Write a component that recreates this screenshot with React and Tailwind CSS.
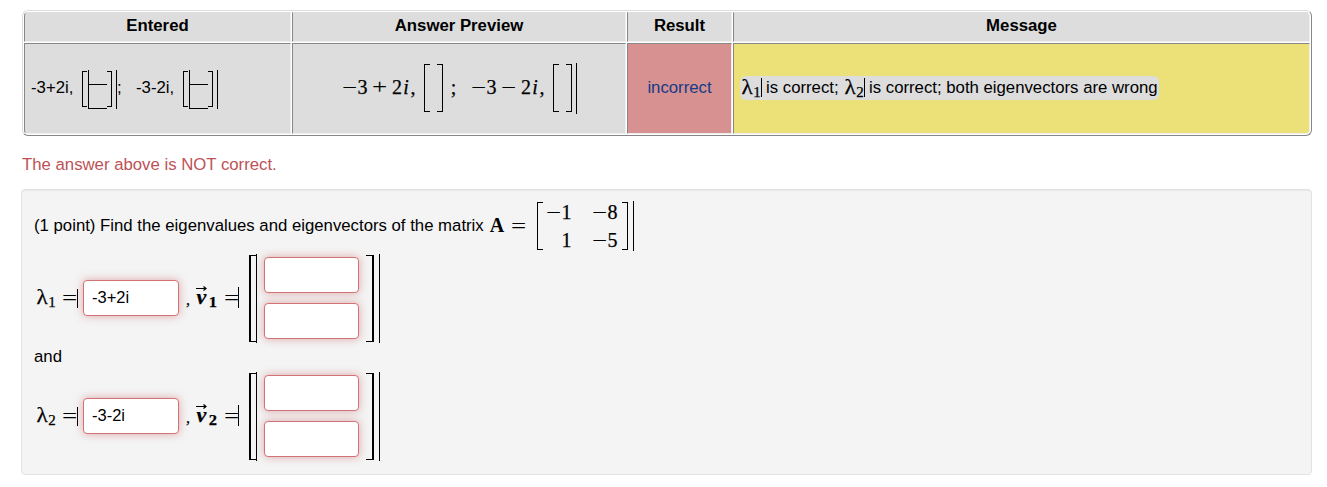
import React from "react";

const Tok = ({ size = "text-[20px]", className = "", children }) => (
  <span className={`inline-flex shrink-0 items-center justify-center whitespace-nowrap font-['Liberation_Serif',serif] leading-none [-webkit-text-stroke:0.25px_currentColor] ${size} ${className}`}>
    {children}
  </span>
);
const Txt = ({ className = "", children }) => (
  <span className={`inline-block shrink-0 whitespace-nowrap ${className}`}>{children}</span>
);
// wide mathematical operator
const Op = ({ className = "", children }) => (
  <span className={`inline-flex w-[15px] shrink-0 items-center justify-center font-['Liberation_Serif',serif] text-[20px] leading-none ${className}`}>
    <span className="inline-block scale-x-[1.35]">{children}</span>
  </span>
);
const Bar = ({ className = "" }) => <span className={`w-px shrink-0 bg-black ${className}`} />;
const LB = ({ className = "" }) => <span className={`shrink-0 border-y border-l border-black ${className}`} />;
const RB = ({ className = "" }) => <span className={`shrink-0 border-y border-r border-black ${className}`} />;

const cell = "border border-t-[#868686] border-l-[#868686] border-r-[#eeeeee] border-b-[#eeeeee]";
const head = "border border-t-[#dddddd] border-l-[#868686] border-r-[#eeeeee] border-b-[#eeeeee] bg-[#dddddd] flex justify-center pt-[3px] font-bold leading-[20px]";

const Field = ({ value = "", className = "" }) => (
  <input
    defaultValue={value}
    className={`block h-9 shrink-0 rounded-[4px] border border-[#d27376] bg-white px-2 pb-0.5 text-[16.5px] text-black shadow-[0_0_8px_rgba(200,90,90,0.5)] outline-none ${className}`}
  />
);

const EmptyVector = () => (
  <>
    <LB className="mt-[2px] h-9 w-[5px]" />
    <span className="ml-px mt-[3px] flex h-[39px] w-[19px] flex-col border-b border-l border-black">
      <span className="h-[15px] border-b border-black" />
    </span>
    <RB className="mt-[2px] h-9 w-[5px]" />
    <Bar className="ml-[4px] mt-[3px] h-[39px]" />
  </>
);

const EmptyBrackets = () => (
  <>
    <LB className="mt-[2px] h-12 w-[6px]" />
    <RB className="ml-[7px] mt-[2px] h-12 w-[6px]" />
  </>
);

const Lambda = ({ n }) => (
  <>
    <Tok size="text-[21px]" className="w-[12px] pb-px">
      <span className="inline-block scale-x-110">λ</span>
    </Tok>
    <Tok size="text-[15px]" className="w-[8px] pt-[9px]">
      <span className="inline-block">{n}</span>
    </Tok>
  </>
);

const VectorRow = ({ n, value }) => (
  <div className="flex h-[90px] items-center">
    <span className="flex w-[49px] shrink-0 items-center pl-[2px]">
      <Lambda n={n} />
      <Op className="ml-[6px]">=</Op>
      <Bar className="h-[19px]" />
    </span>
    <Field value={value} className="w-24" />
    <Tok size="text-[16px]" className="ml-[6px] w-[6px] pt-1">,</Tok>
    <span className="ml-[5px] flex w-[11px] shrink-0 flex-col items-center">
      <svg className="-mb-[4px] h-[5px] w-[11px]" viewBox="0 0 11 5" fill="none" stroke="black" strokeWidth="1.2">
        <path d="M0 2.5H10M7.5 .5 10 2.5 7.5 4.5" />
      </svg>
      <Tok className="mb-1 font-bold italic">
        <span className="inline-block scale-x-110">v</span>
      </Tok>
    </span>
    <Tok size="text-[15px]" className="ml-[2px] w-[8px] pt-[8px] font-bold">
      <span className="inline-block scale-x-110">{n}</span>
    </Tok>
    <Op className="ml-[7px]">=</Op>
    <Bar className="-ml-px mb-[2px] h-[21px]" />
    <span className="ml-[10px] h-[87px] w-[7px] shrink-0 border-y-[1.5px] border-l-2 border-black" />
    <Bar className="mt-px h-[89px]" />
    <span className="ml-[7px] flex w-[95px] shrink-0 flex-col gap-[10px]">
      <Field className="w-full" />
      <Field className="w-full" />
    </span>
    <span className="ml-[7px] h-[87px] w-[8px] shrink-0 border-y-[1.5px] border-r-2 border-black" />
    <Bar className="ml-[5px] mt-px h-[89px]" />
  </div>
);

export default function App() {
  return (
    <div className="h-[487px] w-[1327px] overflow-hidden bg-white font-['Liberation_Sans',Arial,sans-serif] text-[16.75px] text-black">
      <div className="ml-[22px] mt-[10px] grid h-[126px] w-[1290px] grid-cols-[267px_334px_105px_577px] grid-rows-[30px_91px] gap-px overflow-hidden rounded-[6px] border border-t-[#dddddd] border-l-[#dddddd] border-r-[#868686] border-b-[#868686] bg-white p-px">
        <div className={`${head} rounded-tl-[4px]`}>Entered</div>
        <div className={head}>Answer Preview</div>
        <div className={head}>Result</div>
        <div className={`${head} rounded-tr-[4px]`}>Message</div>

        <div className={`${cell} flex items-center rounded-bl-[4px] bg-[#dddddd] pb-[2px] pl-[6px]`}>
          <Txt className="w-[51px]">-3+2i,</Txt>
          <EmptyVector />
          <Txt className="w-[19px]">;</Txt>
          <Txt className="w-[47px]">-3-2i,</Txt>
          <EmptyVector />
        </div>

        <div className={`${cell} flex items-center bg-[#dddddd] pb-[3px] pl-[49px]`}>
          <Op>−</Op>
          <Tok className="w-[11px]">3</Tok>
          <Op className="ml-[4px]">+</Op>
          <Tok className="ml-[5px] w-[10px]">2</Tok>
          <Tok className="w-[8px] italic">i</Tok>
          <Tok className="w-[14px] pr-[8px]">,</Tok>
          <EmptyBrackets />
          <Tok className="ml-[7px] w-[7px]">;</Tok>
          <Op className="ml-[14px]">−</Op>
          <Tok className="w-[11px]">3</Tok>
          <Op className="ml-[4px]">−</Op>
          <Tok className="ml-[5px] w-[10px]">2</Tok>
          <Tok className="w-[8px] italic">i</Tok>
          <Tok className="w-[14px] pr-[8px]">,</Tok>
          <EmptyBrackets />
          <Bar className="ml-[4px] mt-[3px] h-[51px]" />
        </div>

        <div className={`${cell} flex items-center justify-center bg-[#d69190] pb-[2px] text-[#153a87]`}>incorrect</div>

        <div className={`${cell} flex items-center rounded-br-[4px] bg-[#ece178] pb-[2px] pl-[6px]`}>
          <span className="flex h-6 w-[419px] items-center rounded-[6px] bg-[#dddddd] pl-px">
            <Lambda n="1" />
            <Bar className="h-[19px]" />
            <Txt className="w-[82px] pl-[4px]">is correct;</Txt>
            <Lambda n="2" />
            <Bar className="h-[19px]" />
            <Txt className="pl-[4px]">is correct; both eigenvectors are wrong</Txt>
          </span>
        </div>
      </div>

      <p className="ml-[22px] mt-[19px] h-5 leading-5 text-[#bc5256]">The answer above is NOT correct.</p>

      <div className="ml-[21px] mt-[14px] h-[286px] w-[1291px] rounded-[4px] border border-[#e3e3e3] bg-[#f4f4f4] pl-3 pt-[11px] shadow-[inset_0_1px_1px_rgba(0,0,0,0.05)]">
        <div className="flex h-[50px] items-center">
          <Txt className="w-[456px]">(1 point) Find the eigenvalues and eigenvectors of the matrix</Txt>
          <Tok className="w-[14px] pb-[2px] font-bold [-webkit-text-stroke:0px]">A</Tok>
          <Op className="ml-[7px]">=</Op>
          <LB className="ml-[11px] h-12 w-[6px]" />
          <span className="ml-[3px] grid shrink-0 grid-cols-[26px_46px] gap-y-[8px]">
            <span className="flex"><Op>−</Op><Tok className="w-[11px]">1</Tok></span>
            <span className="flex justify-end"><Op>−</Op><Tok className="w-[11px]">8</Tok></span>
            <span className="flex justify-end"><Tok className="w-[11px]">1</Tok></span>
            <span className="flex justify-end"><Op>−</Op><Tok className="w-[11px]">5</Tok></span>
          </span>
          <RB className="ml-[4px] h-12 w-[6px]" />
          <Bar className="ml-[5px] h-[50px]" />
        </div>
        <div className="mt-[2px]">
          <VectorRow n="1" value="-3+2i" />
        </div>
        <p className="mb-[2px] mt-px h-[25px] leading-[25px]">and</p>
        <VectorRow n="2" value="-3-2i" />
      </div>
    </div>
  );
}
